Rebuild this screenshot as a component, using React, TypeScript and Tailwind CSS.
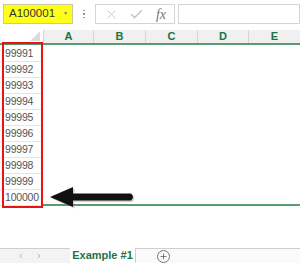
import { Check, X, ChevronLeft, ChevronRight, Plus } from 'lucide-react';

const rows = ['99991', '99992', '99993', '99994', '99995', '99996', '99997', '99998', '99999', '100000'];
const cols = [
  { name: 'A', w: 'w-[50px]' },
  { name: 'B', w: 'w-[52px]' },
  { name: 'C', w: 'w-[52px]' },
  { name: 'D', w: 'w-[51px]' },
  { name: 'E', w: 'w-[52px]' },
];

export default function App() {
  return (
    <div className="w-[300px] h-[263px] bg-white overflow-hidden relative font-['Liberation_Sans',Arial,sans-serif]">
      {/* formula bar */}
      <div className="h-[28px] flex items-start pt-[4px] pl-[3px]">
        <div className="w-[70px] h-[20px] bg-[#ffff1a] border border-[#c8c8a0] flex items-center justify-between pl-[5px] pr-[4px]">
          <span className="text-[11.5px] text-[#333]">A100001</span>
          <span className="text-[5px] text-[#777]">▼</span>
        </div>
        <div className="w-[22px] h-[20px] flex flex-col items-center justify-center gap-[2px]">
          <span className="w-[1.5px] h-[1.5px] bg-[#999]" />
          <span className="w-[1.5px] h-[1.5px] bg-[#999]" />
          <span className="w-[1.5px] h-[1.5px] bg-[#999]" />
        </div>
        <div className="w-[80px] h-[20px] border border-[#d4d4d4] flex items-center px-[8px] gap-[10px]">
          <X className="w-[15px] h-[15px] text-[#c8c8c8]" strokeWidth={1.5} />
          <Check className="w-[15px] h-[15px] text-[#c8c8c8]" strokeWidth={2.5} />
          <span className="text-[14px] italic text-[#777] font-['Liberation_Serif',serif] ml-[2px]">fx</span>
        </div>
        <div className="flex-1 h-[20px] ml-[3px] border border-[#d4d4d4]" />
      </div>

      {/* column headers */}
      <div className="flex h-[15px] mt-[2px] border-b-2 border-[#5a9a74]">
        <div className="w-[43px] relative bg-white">
          <div className="absolute right-[3px] bottom-[2px] w-0 h-0 border-l-[10px] border-l-transparent border-b-[10px] border-b-[#dcdcdc]" />
        </div>
        {cols.map((c) => (
          <div key={c.name} className={`${c.w} bg-[#f0f0f0] border-l border-[#d6d6d6] flex items-center justify-center text-[11px] font-bold text-[#217346]`}>
            {c.name}
          </div>
        ))}
      </div>

      {/* rows */}
      <div className="flex">
        <div className="w-[43px] flex flex-col pt-[1px]">
          {rows.map((r) => (
            <div key={r} className="h-[16px] border-b border-[#e4e4e4] pl-[5px] flex items-center text-[10.5px] text-[#555] tracking-[-0.2px]">
              {r}
            </div>
          ))}
        </div>
        <div className="flex-1 h-[161px] border-b-2 border-[#5a9a74]" />
      </div>

      {/* red highlight */}
      <div className="absolute left-[2px] top-[42px] w-[41px] h-[166px] border-2 border-[#ee1111]" />

      {/* arrow */}
      <svg className="absolute left-[47px] top-[184px]" width="92" height="28" viewBox="0 0 92 28">
        <path d="M3 13 L26 3 L26 9.5 L84 9.5 Q88 13 84 16.5 L26 16.5 L26 23 Z" fill="#777" opacity="0.35" transform="translate(1.5 1.5)" />
        <path d="M3 13 L26 3 L26 9.5 L84 9.5 Q88 13 84 16.5 L26 16.5 L26 23 Z" fill="#111" />
      </svg>

      {/* tab bar */}
      <div className="absolute left-0 right-0 bottom-0 h-[15px] flex">
        <div className="w-[70px] bg-[#f3f3f3] border-t border-[#cfcfcf] flex items-center pl-[17px] gap-[10px] text-[#bbb]">
          <ChevronLeft className="w-[8px] h-[8px]" strokeWidth={3} />
          <ChevronRight className="w-[8px] h-[8px]" strokeWidth={3} />
        </div>
        <div className="w-[65px] bg-white flex items-center justify-center text-[11px] font-bold text-[#217346]">
          Example #1
        </div>
        <div className="flex-1 bg-[#fafafa] border-t border-l border-[#cfcfcf] flex items-center pl-[21px]">
          <div className="w-[13px] h-[13px] rounded-full border border-[#777] flex items-center justify-center">
            <Plus className="w-[9px] h-[9px] text-[#555]" strokeWidth={2} />
          </div>
        </div>
      </div>
    </div>
  );
}
